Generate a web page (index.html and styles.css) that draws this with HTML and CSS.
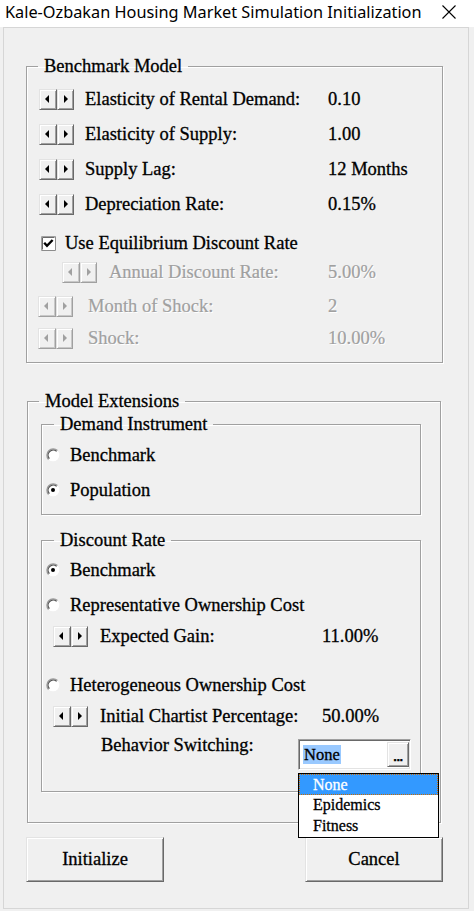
FILE: index.html
```html
<!DOCTYPE html>
<html>
<head>
<meta charset="utf-8">
<title>Kale-Ozbakan Housing Market Simulation Initialization</title>
<link rel="stylesheet" href="styles.css">
</head>
<body>
<div class="window">
  <div class="titlebar">
    <span class="title">Kale-Ozbakan Housing Market Simulation Initialization</span>
    <svg class="close" width="14" height="14" viewBox="0 0 14 14"><path d="M0.5 0.5L13.5 13.5M13.5 0.5L0.5 13.5" stroke="#000" stroke-width="1.1" fill="none"/></svg>
  </div>
  <div class="client">
    <fieldset class="group bench">
      <legend>Benchmark Model</legend>
      <div class="row spinrow">
        <span class="spin"><span class="sb"><i class="tl"></i></span><span class="sb"><i class="tr"></i></span></span>
        <span class="lbl">Elasticity of Rental Demand:</span><span class="val">0.10</span>
      </div>
      <div class="row spinrow gap11">
        <span class="spin"><span class="sb"><i class="tl"></i></span><span class="sb"><i class="tr"></i></span></span>
        <span class="lbl">Elasticity of Supply:</span><span class="val">1.00</span>
      </div>
      <div class="row spinrow gap11">
        <span class="spin"><span class="sb"><i class="tl"></i></span><span class="sb"><i class="tr"></i></span></span>
        <span class="lbl">Supply Lag:</span><span class="val">12 Months</span>
      </div>
      <div class="row spinrow gap11">
        <span class="spin"><span class="sb"><i class="tl"></i></span><span class="sb"><i class="tr"></i></span></span>
        <span class="lbl">Depreciation Rate:</span><span class="val">0.15%</span>
      </div>
      <div class="row checkrow">
        <svg class="check" width="15" height="15" viewBox="0 0 15 15">
          <rect x="0" y="0" width="15" height="15" fill="#fff"/>
          <path d="M0.5 14.5V0.5H14.5" stroke="#a0a0a0" fill="none"/>
          <path d="M1.5 13.5V1.5H13.5" stroke="#696969" fill="none"/>
          <path d="M14.5 0.5V14.5H0.5" stroke="#8c8c8c" fill="none"/>
          <path d="M3.2 6.8L6 9.8L11.6 4" stroke="#000" stroke-width="2.4" fill="none"/>
        </svg>
        <span class="lbl">Use Equilibrium Discount Rate</span>
      </div>
      <div class="row spinrow annual disabled">
        <span class="spin"><span class="sb"><i class="tl"></i></span><span class="sb"><i class="tr"></i></span></span>
        <span class="lbl">Annual Discount Rate:</span><span class="val">5.00%</span>
      </div>
      <div class="row spinrow shockrow month disabled">
        <span class="spin"><span class="sb"><i class="tl"></i></span><span class="sb"><i class="tr"></i></span></span>
        <span class="lbl">Month of Shock:</span><span class="val">2</span>
      </div>
      <div class="row spinrow shockrow shock disabled">
        <span class="spin"><span class="sb"><i class="tl"></i></span><span class="sb"><i class="tr"></i></span></span>
        <span class="lbl">Shock:</span><span class="val">10.00%</span>
      </div>
    </fieldset>

    <fieldset class="group ext">
      <legend>Model Extensions</legend>
      <fieldset class="group inner demand">
        <legend>Demand Instrument</legend>
        <div class="row radiorow">
          <svg class="radio" width="14" height="14" viewBox="0 0 14 14">
            <circle cx="7" cy="7" r="6.3" fill="#fff"/>
            <path d="M2.55 11.45A6.3 6.3 0 0 1 11.45 2.55" stroke="#9a9a9a" stroke-width="1.3" fill="none"/>
            <path d="M3.4 10.6A5.1 5.1 0 0 1 10.6 3.4" stroke="#505050" stroke-width="1.2" fill="none"/>
          </svg>
          <span class="lbl">Benchmark</span>
        </div>
        <div class="row radiorow gap11">
          <svg class="radio" width="14" height="14" viewBox="0 0 14 14">
            <circle cx="7" cy="7" r="6.3" fill="#fff"/>
            <path d="M2.55 11.45A6.3 6.3 0 0 1 11.45 2.55" stroke="#9a9a9a" stroke-width="1.3" fill="none"/>
            <path d="M3.4 10.6A5.1 5.1 0 0 1 10.6 3.4" stroke="#505050" stroke-width="1.2" fill="none"/>
            <circle cx="7" cy="7" r="2" fill="#000"/>
          </svg>
          <span class="lbl">Population</span>
        </div>
      </fieldset>

      <fieldset class="group inner discount">
        <legend>Discount Rate</legend>
        <div class="row radiorow">
          <svg class="radio" width="14" height="14" viewBox="0 0 14 14">
            <circle cx="7" cy="7" r="6.3" fill="#fff"/>
            <path d="M2.55 11.45A6.3 6.3 0 0 1 11.45 2.55" stroke="#9a9a9a" stroke-width="1.3" fill="none"/>
            <path d="M3.4 10.6A5.1 5.1 0 0 1 10.6 3.4" stroke="#505050" stroke-width="1.2" fill="none"/>
            <circle cx="7" cy="7" r="2" fill="#000"/>
          </svg>
          <span class="lbl">Benchmark</span>
        </div>
        <div class="row radiorow gap11">
          <svg class="radio" width="14" height="14" viewBox="0 0 14 14">
            <circle cx="7" cy="7" r="6.3" fill="#fff"/>
            <path d="M2.55 11.45A6.3 6.3 0 0 1 11.45 2.55" stroke="#9a9a9a" stroke-width="1.3" fill="none"/>
            <path d="M3.4 10.6A5.1 5.1 0 0 1 10.6 3.4" stroke="#505050" stroke-width="1.2" fill="none"/>
          </svg>
          <span class="lbl">Representative Ownership Cost</span>
        </div>
        <div class="row spinrow gap7">
          <span class="spin"><span class="sb"><i class="tl"></i></span><span class="sb"><i class="tr"></i></span></span>
          <span class="lbl">Expected Gain:</span><span class="val">11.00%</span>
        </div>
        <div class="row radiorow gap25">
          <svg class="radio" width="14" height="14" viewBox="0 0 14 14">
            <circle cx="7" cy="7" r="6.3" fill="#fff"/>
            <path d="M2.55 11.45A6.3 6.3 0 0 1 11.45 2.55" stroke="#9a9a9a" stroke-width="1.3" fill="none"/>
            <path d="M3.4 10.6A5.1 5.1 0 0 1 10.6 3.4" stroke="#505050" stroke-width="1.2" fill="none"/>
          </svg>
          <span class="lbl">Heterogeneous Ownership Cost</span>
        </div>
        <div class="row spinrow gap7">
          <span class="spin"><span class="sb"><i class="tl"></i></span><span class="sb"><i class="tr"></i></span></span>
          <span class="lbl">Initial Chartist Percentage:</span><span class="val">50.00%</span>
        </div>
        <div class="row behavior">
          <span class="lbl">Behavior Switching:</span>
          <div class="combo-wrap">
            <div class="combo">
              <span class="combo-text"><span class="sel">None</span></span>
              <span class="combo-btn">...</span>
            </div>
            <div class="droplist">
              <div class="item active">None</div>
              <div class="item">Epidemics</div>
              <div class="item">Fitness</div>
            </div>
          </div>
        </div>
      </fieldset>
    </fieldset>

    <div class="buttons">
      <button class="btn" type="button">Initialize</button>
      <button class="btn" type="button">Cancel</button>
    </div>
  </div>
</div>
</body>
</html>
```

FILE: styles.css
```css
* { box-sizing: border-box; }
html, body { margin: 0; padding: 0; }
body {
  width: 474px;
  height: 911px;
  overflow: hidden;
  background: #f0f0f0;
  font-family: "Liberation Serif", "Times New Roman", serif;
  font-size: 18.5px;
  color: #000;
  -webkit-text-stroke: 0.3px currentColor;
}

.titlebar {
  height: 27px;
  background: #fff;
  display: flex;
  align-items: center;
  justify-content: space-between;
  padding: 0 18px 0 5px;
}
.title {
  font-family: "Noto Sans", sans-serif;
  font-size: 16.3px;
  line-height: 20px;
  margin-top: -3px;
  white-space: nowrap;
  -webkit-text-stroke: 0;
}
.close { display: block; margin-top: -3px; }

.client {
  margin: 0 5px 0 3px;
  height: 882px;
  border: 1px solid #d6d6d6;
  background: #f0f0f0;
  padding: 0 25px 0 22px;
}

/* group boxes */
.group {
  margin: 0;
  padding: 0;
  min-width: 0;
  border: 1px solid #a0a0a0;
  box-shadow: 1px 1px 0 #fff, inset 1px 1px 0 #fff;
}
.group > legend {
  padding: 0 6px;
  margin-left: 11px;
  height: 22px;
  line-height: 22px;
  white-space: nowrap;
}

.bench { margin-top: 27px; padding: 10px 0 12px 0; }

.ext { margin: 27px 2px 0 1px; padding: 1px 19px 30px 13px; }
.ext > legend { margin-left: -2px; }
.inner > legend { margin-left: 12px; }
.demand { padding: 8px 0 12px 0; }
.discount { margin-top: 14px; padding: 7px 0 21px 0; }

/* rows */
.row {
  display: flex;
  align-items: center;
  height: 24px;
  white-space: nowrap;
}
.gap7 { margin-top: 7px; }
.gap11 { margin-top: 11px; }
.gap25 { margin-top: 25px; }

.lbl { flex: 1 1 auto; }
.bench .val { flex: 0 0 114px; }
.discount .val { flex: 0 0 98px; }

.bench .spinrow { margin-left: 12px; }
.bench .spinrow .spin { margin-right: 11px; }
.checkrow { margin-top: 15px; margin-left: 14px; }
.checkrow .check { margin-right: 9px; flex: none; }
.annual { margin-top: 5px; margin-left: 35px !important; }
.bench .annual .spin { margin-right: 12px; }
.shockrow { margin-left: 11px !important; }
.bench .shockrow .spin { margin-right: 15px; }
.month { margin-top: 10px; }
.shock { margin-top: 8px; }

.radiorow { margin-left: 4px; }
.radiorow .radio { margin-right: 10px; flex: none; }
.discount .spinrow { margin-left: 11px; }
.discount .spinrow .spin { margin-right: 12px; }

.behavior {
  margin-top: 5px;
  height: 37px;
  align-items: flex-start;
  margin-left: 59px;
}
.behavior .lbl { flex: 0 0 197px; line-height: 24px; }

.disabled { color: #a0a0a0; text-shadow: 1px 1px 0 #fff; -webkit-text-stroke: 0.2px #a0a0a0; }

/* spin buttons */
.spin { display: flex; flex: none; width: 35px; height: 21px; }
.sb {
  width: 17.5px;
  height: 21px;
  display: flex;
  align-items: center;
  justify-content: center;
  background: #f0f0f0;
  border: 1px solid;
  border-color: #e3e3e3 #696969 #696969 #e3e3e3;
  box-shadow: inset 1px 1px 0 #fff, inset -1px -1px 0 #a0a0a0;
}
.tl, .tr { display: block; width: 0; height: 0; border-top: 4px solid transparent; border-bottom: 4px solid transparent; }
.tl { border-right: 4px solid #000; margin-left: -1px; }
.tr { border-left: 4px solid #000; margin-left: 1px; }
.disabled .sb { border-color: #e3e3e3 #a0a0a0 #a0a0a0 #e3e3e3; box-shadow: inset 1px 1px 0 #fff, inset -1px -1px 0 #c8c8c8; }
.disabled .tl { border-right-color: #a0a0a0; }
.disabled .tr { border-left-color: #a0a0a0; }

/* combobox */
.combo-wrap { position: relative; margin-top: 6px; }
.combo {
  width: 113px;
  height: 31px;
  display: flex;
  background: #fff;
  border: 1px solid;
  border-color: #a0a0a0 #fff #fff #a0a0a0;
  box-shadow: inset 1px 1px 0 #696969, inset -1px -1px 0 #e3e3e3;
  padding: 2px 1px 2px 4px;
}
.combo-text { flex: 1 1 auto; font-size: 16.5px; line-height: 19px; padding-top: 3px; }
.sel { background: #99c9ff; display: inline-block; padding: 0 1px; }
.combo-btn {
  flex: 0 0 22px;
  height: 25px;
  background: #f0f0f0;
  border: 1px solid;
  border-color: #e3e3e3 #696969 #696969 #e3e3e3;
  box-shadow: inset 1px 1px 0 #fff, inset -1px -1px 0 #a0a0a0;
  font-family: "Liberation Sans", Arial, sans-serif;
  font-weight: bold;
  font-size: 13px;
  line-height: 12px;
  letter-spacing: -0.5px;
  display: flex;
  align-items: flex-end;
  justify-content: center;
  padding-bottom: 3px;
}

.droplist {
  position: absolute;
  top: 34px;
  left: 0;
  width: 141px;
  background: #fff;
  border: 1px solid #000;
  font-size: 16px;
  z-index: 2;
}
.item { height: 21px; line-height: 19px; padding-left: 14px; }
.item.active {
  background: #3399ff;
  color: #fff;
  border: 1px dotted #c86a00;
  padding-left: 13px;
}

/* buttons */
.buttons {
  display: flex;
  justify-content: space-between;
  margin-top: 14px;
}
.btn {
  width: 138px;
  height: 45px;
  margin: 0;
  padding: 0;
  font: inherit;
  color: #000;
  background: #f0f0f0;
  border: 1px solid;
  border-color: #e3e3e3 #696969 #696969 #e3e3e3;
  box-shadow: inset 1px 1px 0 #fff, inset -1px -1px 0 #a0a0a0;
  -webkit-text-stroke: 0.3px #000;
}
```
